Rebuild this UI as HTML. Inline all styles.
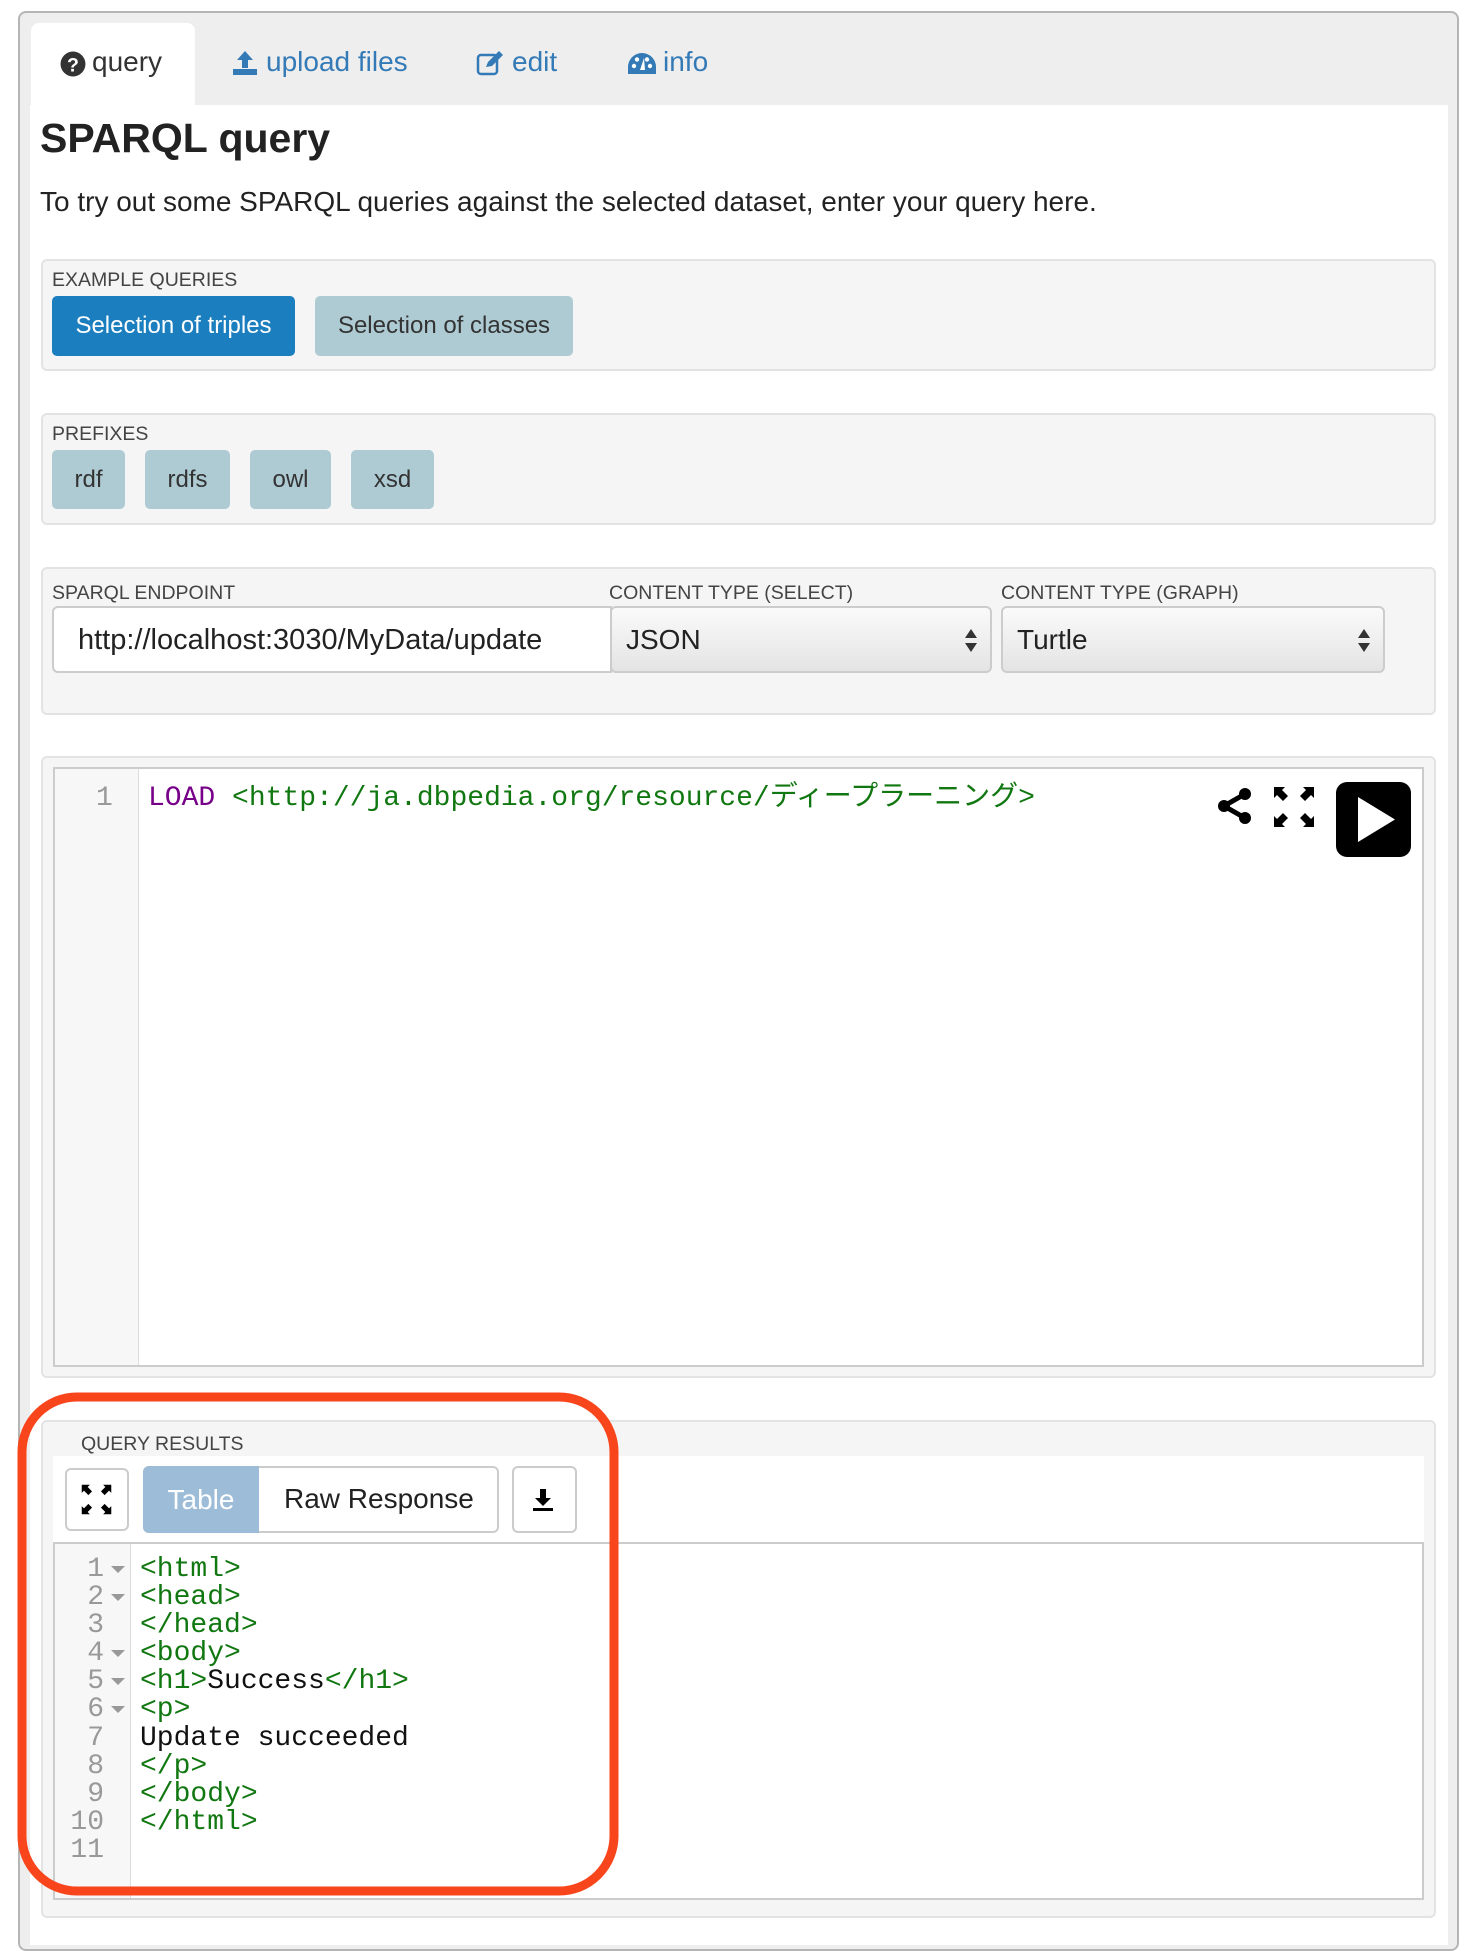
<!DOCTYPE html>
<html><head><meta charset="utf-8">
<style>
*{box-sizing:border-box;margin:0;padding:0}
body{width:1478px;height:1932px;background:#fff;font-family:"Liberation Sans",Arial,sans-serif;color:#333;position:relative;overflow:hidden}
.abs{position:absolute}
.outer{left:18px;top:11px;width:1441px;height:1940px;border:2px solid #b5b5b5;border-radius:8px;background:#eee}
.inner{left:30px;top:105px;width:1418px;height:1840px;background:#fff}
.tab{top:23px;left:31px;width:164px;height:90px;background:#fff;border-radius:8px 8px 0 0}
.tt{font-size:28px;top:46px;color:#337ab7;white-space:nowrap}
.well{background:#f5f5f5;border:2px solid #e3e3e3;border-radius:6px}
.lbl{font-size:19.5px;color:#444;white-space:nowrap}
.btn{border-radius:5px;font-size:24px;display:flex;align-items:center;justify-content:center;color:#333;background:#aecbd4}
.sel{border:2px solid #ccc;border-radius:6px;background:linear-gradient(#fafafa,#e4e4e4);font-size:28px;padding-left:14px;display:flex;align-items:center;color:#222}
.arr{position:absolute;right:12px;top:17px}
.mono{font-family:"Liberation Mono","Noto Sans CJK JP",monospace;font-size:28px;white-space:pre}
.g{color:#117711}
</style></head><body>
<div class="abs outer"></div>
<div class="abs inner"></div>
<div class="abs tab"></div>

<svg class="abs" style="left:60px;top:51px" width="26" height="26" viewBox="0 0 24 24"><circle cx="12" cy="12" r="11.5" fill="#333"/><text x="12" y="19" font-size="18" font-weight="bold" text-anchor="middle" fill="#fff" font-family="Liberation Sans">?</text></svg>
<div class="abs tt" style="left:92px;color:#333">query</div>
<svg class="abs" style="left:232px;top:50px" width="26" height="26" viewBox="0 0 26 26"><path d="M13 1 L21 10 H16 V18 H10 V10 H5 Z" fill="#337ab7"/><rect x="1" y="19" width="24" height="6" fill="#337ab7"/></svg>
<div class="abs tt" style="left:266px">upload files</div>
<svg class="abs" style="left:476px;top:50px" width="28" height="26" viewBox="0 0 28 26"><rect x="2" y="5" width="19" height="19" rx="3" fill="none" stroke="#337ab7" stroke-width="2.5"/><path d="M10 17 L12 12 L23 1 L27 5 L16 16 Z" fill="#337ab7"/></svg>
<div class="abs tt" style="left:512px">edit</div>
<svg class="abs" style="left:627px;top:52px" width="30" height="24" viewBox="0 0 30 24"><path d="M15 1 A14 14 0 0 0 1 15 V22 H29 V15 A14 14 0 0 0 15 1Z" fill="#337ab7"/><circle cx="7" cy="14" r="2.2" fill="#fff"/><circle cx="10" cy="7.5" r="2.2" fill="#fff"/><circle cx="20" cy="7.5" r="2.2" fill="#fff"/><circle cx="23" cy="14" r="2.2" fill="#fff"/><path d="M13 18 L17 6 L18 18Z" fill="#fff"/></svg>
<div class="abs tt" style="left:663px">info</div>

<div class="abs" style="left:40px;top:115px;font-size:41px;font-weight:bold;color:#222">SPARQL query</div>
<div class="abs" style="left:40px;top:186px;font-size:28px;color:#222">To try out some SPARQL queries against the selected dataset, enter your query here.</div>

<div class="abs well" style="left:41px;top:259px;width:1395px;height:112px"></div>
<div class="abs lbl" style="left:52px;top:269px">EXAMPLE QUERIES</div>
<div class="abs btn" style="left:52px;top:296px;width:243px;height:60px;background:#1a7ebf;color:#fff">Selection of triples</div>
<div class="abs btn" style="left:315px;top:296px;width:258px;height:60px">Selection of classes</div>

<div class="abs well" style="left:41px;top:413px;width:1395px;height:112px"></div>
<div class="abs lbl" style="left:52px;top:423px">PREFIXES</div>
<div class="abs btn" style="left:52px;top:450px;width:73px;height:59px">rdf</div>
<div class="abs btn" style="left:145px;top:450px;width:85px;height:59px">rdfs</div>
<div class="abs btn" style="left:250px;top:450px;width:81px;height:59px">owl</div>
<div class="abs btn" style="left:351px;top:450px;width:83px;height:59px">xsd</div>

<div class="abs well" style="left:41px;top:567px;width:1395px;height:148px"></div>
<div class="abs lbl" style="left:52px;top:582px">SPARQL ENDPOINT</div>
<div class="abs lbl" style="left:609px;top:582px">CONTENT TYPE (SELECT)</div>
<div class="abs lbl" style="left:1001px;top:582px">CONTENT TYPE (GRAPH)</div>
<div class="abs" style="left:52px;top:606px;width:560px;height:67px;border:2px solid #ccc;border-radius:6px 0 0 6px;background:#fff;font-size:29px;padding:16px 0 0 24px;color:#222">http://localhost:3030/MyData/update</div>
<div class="abs sel" style="left:610px;top:606px;width:382px;height:67px">JSON<svg class="arr" width="14" height="30" viewBox="0 0 14 30"><path d="M7 4 L13 13 H1Z M7 27 L13 18 H1Z" fill="#333"/></svg></div>
<div class="abs sel" style="left:1001px;top:606px;width:384px;height:67px">Turtle<svg class="arr" width="14" height="30" viewBox="0 0 14 30"><path d="M7 4 L13 13 H1Z M7 27 L13 18 H1Z" fill="#333"/></svg></div>

<div class="abs well" style="left:41px;top:756px;width:1395px;height:622px"></div>
<div class="abs" style="left:53px;top:767px;width:1371px;height:600px;border:2px solid #ccc;background:#fff"></div>
<div class="abs" style="left:55px;top:769px;width:84px;height:596px;background:#f7f7f7;border-right:1px solid #ddd"></div>
<div class="abs mono" style="left:96px;top:783px;line-height:32px;color:#999">1</div>
<div class="abs mono" style="left:148px;top:783px;line-height:32px"><span style="color:#770088">LOAD</span> <span class="g">&lt;http://ja.dbpedia.org/resource/ディープラーニング&gt;</span></div>
<svg class="abs" style="left:1216px;top:787px" width="38" height="38" viewBox="0 0 38 38"><path d="M29 7 L8 19 L29 31" stroke="#000" stroke-width="5" fill="none"/><circle cx="29" cy="7" r="6" fill="#000"/><circle cx="8" cy="19" r="6" fill="#000"/><circle cx="29" cy="31" r="6" fill="#000"/></svg>
<svg class="abs" style="left:1273px;top:786px" width="42" height="42" viewBox="0 0 42 42" fill="#000"><path d="M1 1H12L9 4L15 10L10 15L4 9L1 12Z"/><path d="M41 1H30L33 4L27 10L32 15L38 9L41 12Z"/><path d="M1 41H12L9 38L15 32L10 27L4 33L1 30Z"/><path d="M41 41H30L33 38L27 32L32 27L38 33L41 30Z"/></svg>
<svg class="abs" style="left:1336px;top:782px" width="75" height="75" viewBox="0 0 75 75"><rect width="75" height="75" rx="11" fill="#000"/><path d="M22 15 L59 37.5 L22 60Z" fill="#fff"/></svg>

<div class="abs well" style="left:41px;top:1420px;width:1395px;height:498px"></div>
<div class="abs lbl" style="left:81px;top:1433px">QUERY RESULTS</div>
<div class="abs" style="left:53px;top:1456px;width:1371px;height:86px;background:#fff"></div>
<div class="abs" style="left:65px;top:1468px;width:64px;height:63px;border:2px solid #ccc;border-radius:6px;background:#fff"></div>
<svg class="abs" style="left:81px;top:1484px" width="31" height="31" viewBox="0 0 42 42" fill="#000"><path d="M1 1H12L9 4L15 10L10 15L4 9L1 12Z"/><path d="M41 1H30L33 4L27 10L32 15L38 9L41 12Z"/><path d="M1 41H12L9 38L15 32L10 27L4 33L1 30Z"/><path d="M41 41H30L33 38L27 32L32 27L38 33L41 30Z"/></svg>
<div class="abs" style="left:143px;top:1466px;width:356px;height:67px;border:2px solid #ccc;border-radius:6px;background:#fff"></div>
<div class="abs btn" style="left:143px;top:1466px;width:116px;height:67px;background:#9dbcd8;color:#fff;font-size:28px;border-radius:6px 0 0 6px">Table</div>
<div class="abs" style="left:284px;top:1483px;font-size:28px;color:#222">Raw Response</div>
<div class="abs" style="left:512px;top:1466px;width:65px;height:67px;border:2px solid #ccc;border-radius:6px;background:#fff"></div>
<svg class="abs" style="left:531px;top:1488px" width="24" height="24" viewBox="0 0 24 24"><path d="M9 1H15V10H20L12 18L4 10H9Z" fill="#000"/><rect x="2" y="20" width="20" height="3" fill="#000"/></svg>
<div class="abs" style="left:53px;top:1542px;width:1371px;height:358px;border:2px solid #ccc;background:#fff"></div>
<div class="abs" style="left:55px;top:1544px;width:76px;height:354px;background:#f7f7f7;border-right:1px solid #ddd"></div>
<div class="abs mono" style="left:58px;top:1556px;line-height:28.1px;color:#999;text-align:right;width:46px">1
2
3
4
5
6
7
8
9
10
11</div>
<svg class="abs" style="left:110px;top:1556px" width="18" height="200" fill="#999"><path d="M1 10H15L8 17Z M1 38H15L8 45Z M1 94H15L8 101Z M1 122H15L8 129Z M1 150H15L8 157Z"/></svg>
<div class="abs mono" style="left:140px;top:1556px;line-height:28.1px;color:#111"><span class="g">&lt;html&gt;</span>
<span class="g">&lt;head&gt;</span>
<span class="g">&lt;/head&gt;</span>
<span class="g">&lt;body&gt;</span>
<span class="g">&lt;h1&gt;</span>Success<span class="g">&lt;/h1&gt;</span>
<span class="g">&lt;p&gt;</span>
Update succeeded
<span class="g">&lt;/p&gt;</span>
<span class="g">&lt;/body&gt;</span>
<span class="g">&lt;/html&gt;</span>
</div>

<svg class="abs" style="left:0;top:1380px" width="640" height="530"><rect x="22" y="17" width="592" height="494" rx="55" fill="none" stroke="#f9451c" stroke-width="9"/></svg>
</body></html>
